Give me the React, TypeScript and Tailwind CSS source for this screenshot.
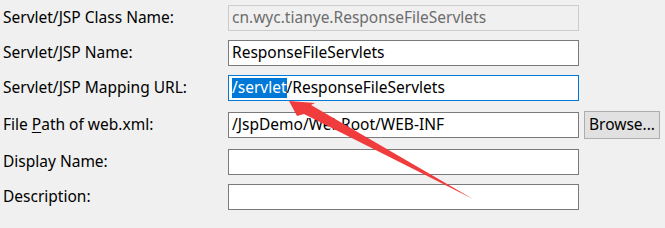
import React from 'react';

type Row = {
  label: React.ReactNode;
  value?: React.ReactNode;
  disabled?: boolean;
  focused?: boolean;
  browse?: boolean;
  mt: string;
};

const rows: Row[] = [
  {
    label: 'Servlet/JSP Class Name:',
    value: 'cn.wyc.tianye.ResponseFileServlets',
    disabled: true,
    mt: 'mt-[5px]',
  },
  { label: 'Servlet/JSP Name:', value: 'ResponseFileServlets', mt: 'mt-[9px]' },
  {
    label: 'Servlet/JSP Mapping URL:',
    value: (
      <>
        <span className="bg-[#0078d7] py-[2px] text-white">/servlet</span>/ResponseFileServlets
      </>
    ),
    focused: true,
    mt: 'mt-[9px]',
  },
  {
    label: (
      <>
        File <span className="underline underline-offset-2">P</span>ath of web.xml:
      </>
    ),
    value: '/JspDemo/WebRoot/WEB-INF',
    browse: true,
    mt: 'mt-[10px]',
  },
  { label: 'Display Name:', mt: 'mt-[10px]' },
  { label: 'Description:', mt: 'mt-[9px]' },
];

const App = () => {
  return (
    <div
      className="relative h-[228px] w-[665px] overflow-hidden bg-[#f0f0f0] text-[15.5px] text-black"
      style={{ fontFamily: '"Noto Sans", "Liberation Sans", sans-serif' }}
    >
      <div className="flex flex-col pl-[3px]">
        {rows.map((row, i) => (
          <div
            key={i}
            className={`flex items-center ${row.browse ? 'h-[28px]' : 'h-[26px]'} ${row.mt}`}
          >
            <div className="w-[225px] shrink-0 leading-none">{row.label}</div>
            <div
              className={`flex h-[26px] w-[351px] shrink-0 items-center border px-[3px] leading-none whitespace-nowrap ${
                row.disabled
                  ? 'border-[#cccccc] bg-[#f0f0f0] text-[#6d6d6d]'
                  : row.focused
                    ? 'border-[#0078d7] bg-white'
                    : 'border-[#7a7a7a] bg-white'
              }`}
            >
              {row.value}
            </div>
            {row.browse && (
              <div className="ml-[5px] flex h-[28px] w-[76px] items-center justify-center border border-[#adadad] bg-[#e1e1e1] leading-none">
                Browse...
              </div>
            )}
          </div>
        ))}
      </div>

      <svg
        className="pointer-events-none absolute top-0 left-0"
        width="665"
        height="228"
        viewBox="0 0 665 228"
      >
        <polygon
          points="289,101 297,116 304,114 473,199 311,105 315,103"
          fill="#f03c3c"
        />
      </svg>
    </div>
  );
};

export default App;
